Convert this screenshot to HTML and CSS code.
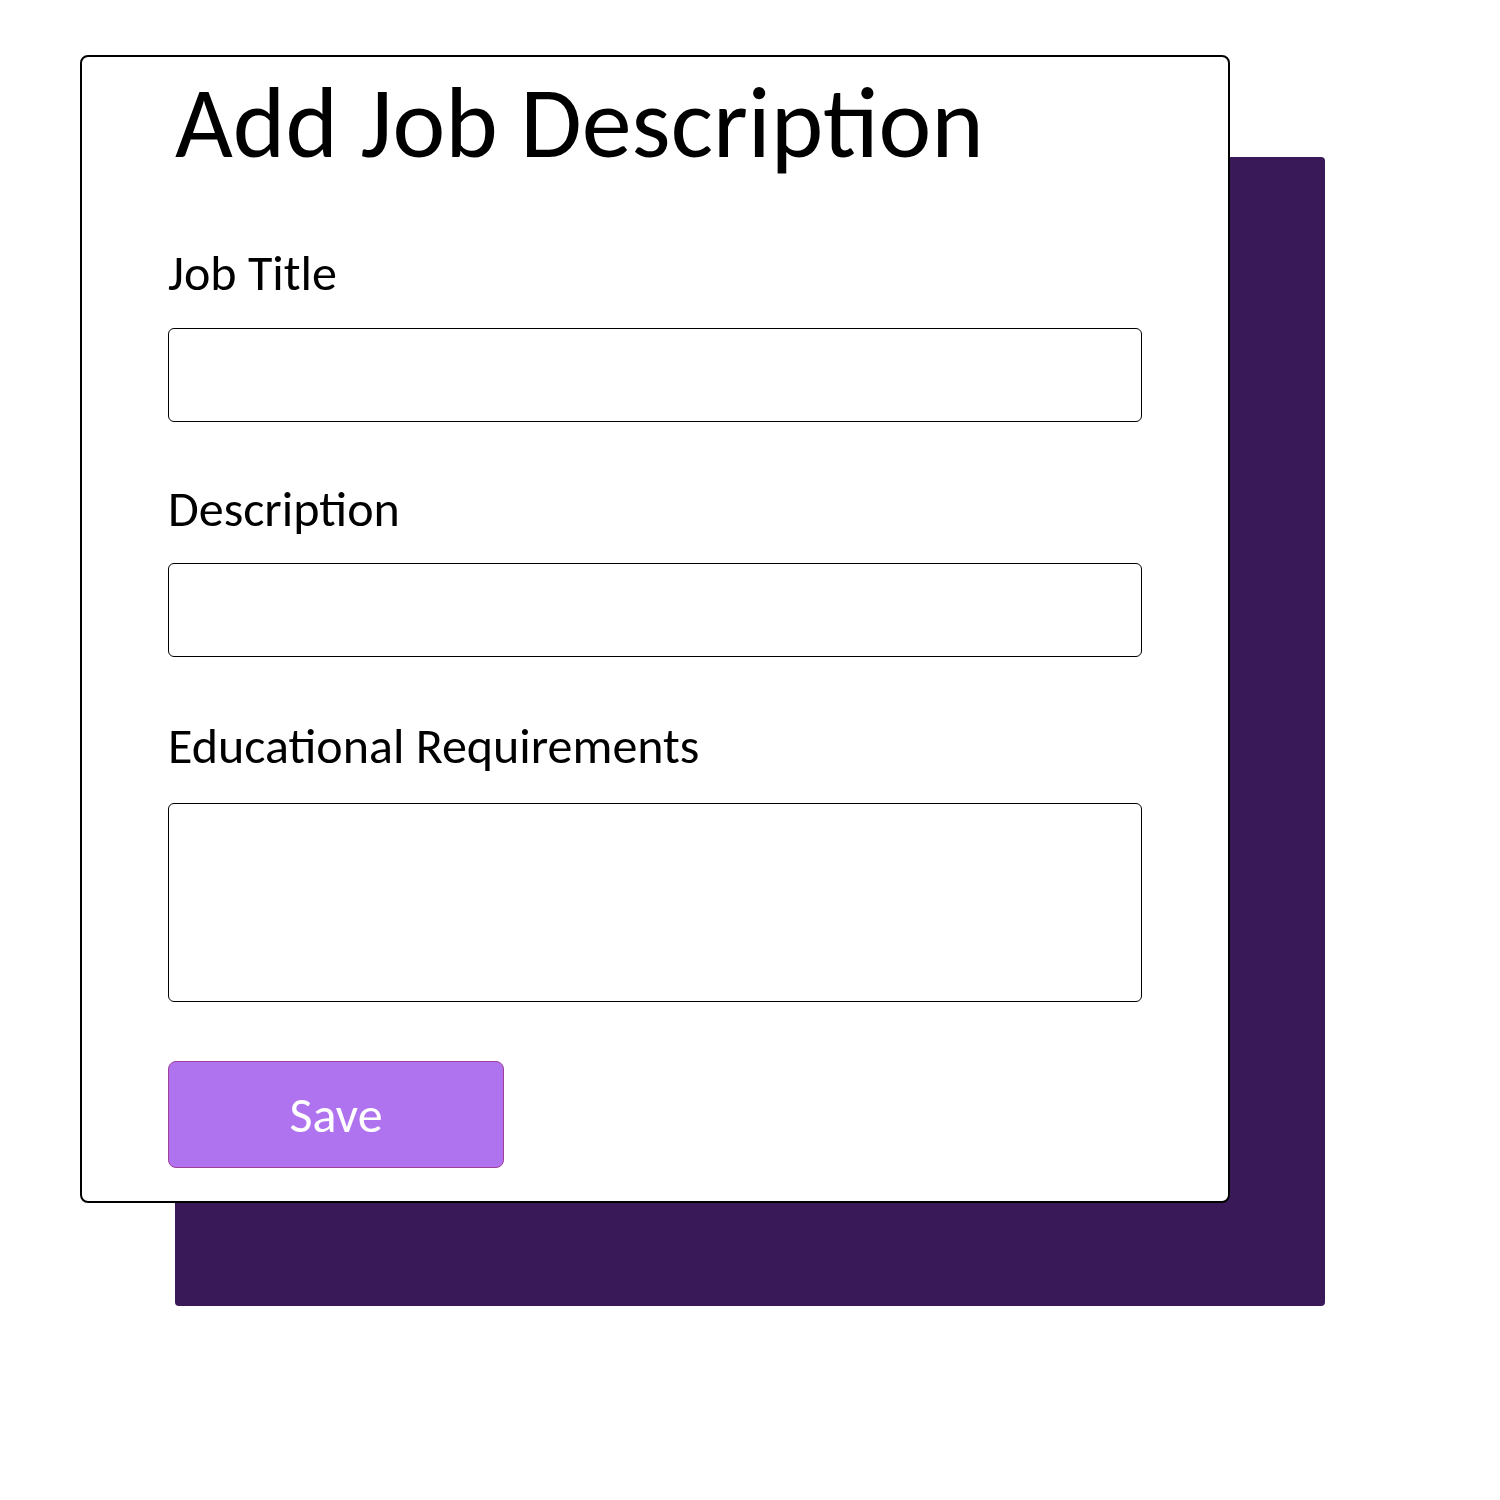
FILE: index.html
```html
<!DOCTYPE html>
<html lang="en">
<head>
<meta charset="utf-8">
<title>Add Job Description</title>
<link rel="stylesheet" href="styles.css">
</head>
<body>
<div class="stage">
  <div class="frame">
    <div class="backdrop"></div>
    <form class="card">
      <h1 class="title">Add Job Description</h1>
      <div class="field field-title">
        <label class="label" for="jt">Job Title</label>
        <input class="input" id="jt" type="text">
      </div>
      <div class="field field-desc">
        <label class="label" for="desc">Description</label>
        <input class="input" id="desc" type="text">
      </div>
      <div class="field field-edu">
        <label class="label" for="edu">Educational Requirements</label>
        <textarea class="input textarea" id="edu"></textarea>
      </div>
      <button class="save" type="button">Save</button>
    </form>
  </div>
</div>
</body>
</html>
```

FILE: styles.css
```css
html, body {
  margin: 0;
  padding: 0;
  min-height: 1500px;
}
html {
  background: #ffffff;
}
body {
  font-family: "Carlito", "Calibri", "Lato", sans-serif;
  color: #000;
}
.stage {
  box-sizing: border-box;
  min-height: 1500px;
  padding: 55px 0 0 80px;
}
.frame {
  position: relative;
  width: 1245px;
  height: 1251px;
}
.backdrop {
  position: absolute;
  left: 95px;
  top: 102px;
  width: 1150px;
  height: 1149px;
  background: #3a1959;
  border-radius: 4px;
}
.card {
  position: relative;
  box-sizing: border-box;
  width: 1150px;
  height: 1148px;
  border: 2px solid #000;
  border-radius: 8px;
  background: #fff;
  padding: 0 0 0 86px;
  display: flex;
  flex-direction: column;
}
.title {
  margin: 0 0 54px 0;
  padding-left: 7px;
  font-size: 100px;
  font-weight: 400;
  line-height: 132px;
}
.field {
  display: flex;
  flex-direction: column;
}
.label {
  font-size: 50px;
  line-height: 60px;
  margin-bottom: 25px;
}
.field-title {
  margin-bottom: 57px;
}
.field-desc {
  margin-bottom: 59px;
}
.field-desc .label {
  margin-bottom: 24px;
}
.field-edu {
  margin-bottom: 59px;
}
.field-edu .label {
  margin-bottom: 27px;
}
.input {
  box-sizing: border-box;
  width: 974px;
  height: 94px;
  border: 1px solid #000;
  border-radius: 6px;
  margin: 0;
  padding: 0 12px;
  font: inherit;
  font-size: 40px;
  background: #fff;
}
.textarea {
  height: 199px;
  resize: none;
}
.save {
  box-sizing: border-box;
  width: 336px;
  height: 107px;
  background: #b073f0;
  border: 1px solid #a0409a;
  border-radius: 8px;
  color: #fff;
  font: inherit;
  font-size: 50px;
  padding: 0;
}
```
